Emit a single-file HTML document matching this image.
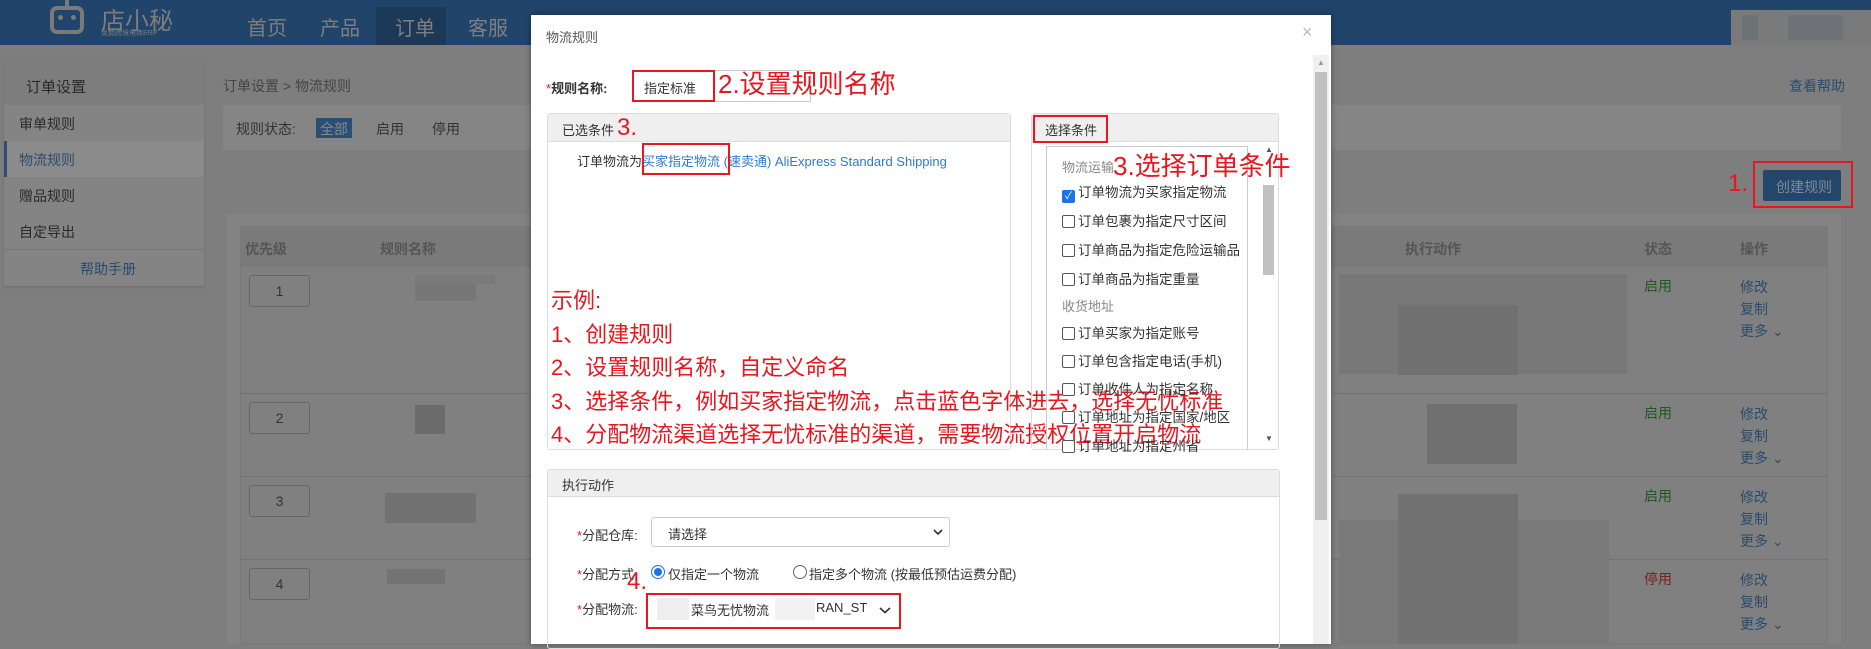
<!DOCTYPE html>
<html><head><meta charset="utf-8">
<style>
*{box-sizing:border-box;margin:0;padding:0}
body{width:1871px;height:644px;overflow:hidden;background:#7e7e7e;font-family:"Liberation Sans","Noto Sans CJK SC",sans-serif;font-size:14px;color:#333;position:relative}
.a{position:absolute;white-space:nowrap}
.red{color:#e8161e}
.rb{position:absolute;border:2px solid #e8161e}
.blk{position:absolute;background:#707070}
.cb{display:inline-block;width:13px;height:13px;border:1px solid #555;border-radius:2px;vertical-align:-2px;margin-right:3px;background:#fff}
.it{position:absolute;left:1062px;font-size:13.5px;color:#333}
</style></head><body>
<div class="a" style="left:0;top:0;width:1871px;height:45px;background:#21446a"></div>
<div class="a" style="left:50px;top:6px;width:34px;height:28px;border:4px solid #7a7a7a;border-radius:7px"></div>
<div class="a" style="left:65px;top:0;width:4px;height:7px;background:#7a7a7a"></div>
<div class="a" style="left:58px;top:15px;width:5px;height:5px;background:#7a7a7a;border-radius:50%"></div>
<div class="a" style="left:71px;top:15px;width:5px;height:5px;background:#7a7a7a;border-radius:50%"></div>
<div class="a" style="left:101px;top:1px;font-size:24px;color:#7d7d7d">店小秘</div>
<div class="a" style="left:101px;top:28px;font-size:7px;color:#7d7d7d">免费跨境电商ERP</div>
<div class="a" style="left:376px;top:7px;width:70px;height:38px;background:#1c3a58"></div>
<div class="a" style="left:247px;top:12px;font-size:20px;color:#7f7f7f">首页</div>
<div class="a" style="left:320px;top:12px;font-size:20px;color:#7f7f7f">产品</div>
<div class="a" style="left:395px;top:12px;font-size:20px;color:#7f7f7f">订单</div>
<div class="a" style="left:468px;top:12px;font-size:20px;color:#7f7f7f">客服</div>
<div class="a" style="left:1731px;top:10px;width:140px;height:35px;background:#7a7a7a"></div>
<div class="a" style="left:1742px;top:15px;width:16px;height:25px;background:#6a7474"></div>
<div class="a" style="left:1788px;top:15px;width:55px;height:25px;background:#6e7176"></div>

<div class="a" style="left:4px;top:64px;width:200px;height:222px;background:#848484;box-shadow:0 1px 2px #6f6f6f"></div>
<div class="a" style="left:4px;top:64px;width:200px;height:41px;background:#7d7d7d"></div>
<div class="a" style="left:26px;top:76px;font-size:15px;color:#2a2a2a">订单设置</div>
<div class="a" style="left:19px;top:114px;color:#2a2a2a">审单规则</div>
<div class="a" style="left:4px;top:141px;width:200px;height:36px;background:#8b8b8b;border-left:3px solid #2e4d6e"></div>
<div class="a" style="left:19px;top:150px;color:#2e4d6e">物流规则</div>
<div class="a" style="left:19px;top:186px;color:#2a2a2a">赠品规则</div>
<div class="a" style="left:19px;top:222px;color:#2a2a2a">自定导出</div>
<div class="a" style="left:4px;top:249px;width:200px;height:1px;background:#777"></div>
<div class="a" style="left:80px;top:259px;color:#2a4b6e">帮助手册</div>

<div class="a" style="left:223px;top:76px;color:#444">订单设置 &gt; 物流规则</div>
<div class="a" style="left:1789px;top:76px;color:#2a4b6e">查看帮助</div>
<div class="a" style="left:223px;top:105px;width:1618px;height:45px;background:#858585"></div>
<div class="a" style="left:236px;top:119px;color:#333">规则状态:</div>
<div class="a" style="left:316px;top:118px;width:36px;height:20px;background:#2b4f73"></div>
<div class="a" style="left:320px;top:119px;color:#888">全部</div>
<div class="a" style="left:376px;top:119px;color:#333">启用</div>
<div class="a" style="left:432px;top:119px;color:#333">停用</div>
<div class="a" style="left:1763px;top:170px;width:78px;height:31px;background:#24466a;border-radius:2px"></div>
<div class="a" style="left:1776px;top:177px;color:#7e8a98">创建规则</div>
<div class="rb" style="left:1753px;top:161px;width:100px;height:47px"></div>
<div class="a red" style="left:1728px;top:170px;font-size:24px">1.</div>

<div class="a" style="left:227px;top:214px;width:1614px;height:430px;background:#838383"></div>
<div class="a" style="left:240px;top:226px;width:1588px;height:418px;border:1px solid #777;background:#808080"></div>
<div class="a" style="left:240px;top:226px;width:1588px;height:41px;background:#7a7a7a"></div>
<div class="a" style="left:245px;top:239px;font-weight:bold;color:#555">优先级</div>
<div class="a" style="left:380px;top:239px;font-weight:bold;color:#555">规则名称</div>
<div class="a" style="left:1405px;top:239px;font-weight:bold;color:#555">执行动作</div>
<div class="a" style="left:1644px;top:239px;font-weight:bold;color:#555">状态</div>
<div class="a" style="left:1740px;top:239px;font-weight:bold;color:#555">操作</div>
<div class="a" style="left:240px;top:393px;width:1588px;height:1px;background:#737373"></div>
<div class="a" style="left:240px;top:476px;width:1588px;height:1px;background:#737373"></div>
<div class="a" style="left:240px;top:559px;width:1588px;height:1px;background:#737373"></div>
<div class="a" style="left:249px;top:275px;width:61px;height:32px;border:1px solid #666;border-radius:3px;text-align:center;line-height:30px;color:#333">1</div>
<div class="a" style="left:249px;top:402px;width:61px;height:32px;border:1px solid #666;border-radius:3px;text-align:center;line-height:30px;color:#333">2</div>
<div class="a" style="left:249px;top:485px;width:61px;height:32px;border:1px solid #666;border-radius:3px;text-align:center;line-height:30px;color:#333">3</div>
<div class="a" style="left:249px;top:568px;width:61px;height:32px;border:1px solid #666;border-radius:3px;text-align:center;line-height:30px;color:#333">4</div>
<div class="blk" style="left:415px;top:284px;width:61px;height:17px;background:#777"></div>
<div class="blk" style="left:415px;top:275px;width:80px;height:9px;background:#7a7a7a"></div>
<div class="blk" style="left:415px;top:405px;width:30px;height:29px;background:#6b6b6b"></div>
<div class="blk" style="left:385px;top:493px;width:91px;height:30px;background:#727272"></div>
<div class="blk" style="left:387px;top:569px;width:58px;height:15px;background:#737373"></div>
<div class="blk" style="left:1339px;top:274px;width:288px;height:100px;background:#787878"></div>
<div class="blk" style="left:1398px;top:305px;width:120px;height:70px;background:#707070"></div>
<div class="blk" style="left:1427px;top:404px;width:90px;height:60px;background:#707070"></div>
<div class="blk" style="left:1339px;top:520px;width:270px;height:124px;background:#797979"></div>
<div class="blk" style="left:1398px;top:494px;width:120px;height:150px;background:#727272"></div>
<div class="a" style="left:1644px;top:276px;color:#1d5a1d">启用</div>
<div class="a" style="left:1644px;top:403px;color:#1d5a1d">启用</div>
<div class="a" style="left:1644px;top:486px;color:#1d5a1d">启用</div>
<div class="a" style="left:1644px;top:569px;color:#7a1e1e">停用</div>
<div class="a" style="left:1740px;top:276px;color:#2a4b6e;line-height:22px">修改<br>复制<br>更多 ⌄</div>
<div class="a" style="left:1740px;top:403px;color:#2a4b6e;line-height:22px">修改<br>复制<br>更多 ⌄</div>
<div class="a" style="left:1740px;top:486px;color:#2a4b6e;line-height:22px">修改<br>复制<br>更多 ⌄</div>
<div class="a" style="left:1740px;top:569px;color:#2a4b6e;line-height:22px">修改<br>复制<br>更多 ⌄</div>

<div class="a" style="left:531px;top:15px;width:800px;height:629px;background:#fff;box-shadow:0 0 6px rgba(0,0,0,.4)"></div>
<div class="a" style="left:546px;top:27px;font-size:13px;color:#555">物流规则</div>
<div class="a" style="left:1302px;top:22px;font-size:18px;color:#bbb">×</div>
<div class="a" style="left:1313px;top:55px;width:16px;height:589px;background:#f0f0f0"></div>
<div class="a" style="left:1315px;top:72px;width:12px;height:448px;background:#c1c1c1"></div>
<div class="a" style="left:1317px;top:58px;font-size:8px;color:#999">▲</div>

<div class="a" style="left:546px;top:78px;font-size:13px;font-weight:bold;color:#333"><span class="red" style="font-weight:normal">*</span>规则名称:</div>
<div class="a" style="left:632px;top:70px;width:179px;height:32px;border:1px solid #ccc"></div>
<div class="a" style="left:644px;top:78px;font-size:13px;color:#333">指定标准</div>
<div class="rb" style="left:632px;top:70px;width:83px;height:32px"></div>
<div class="a red" style="left:718px;top:64px;font-size:26px">2.设置规则名称</div>

<div class="a" style="left:547px;top:113px;width:464px;height:337px;border:1px solid #ddd;border-radius:3px"></div>
<div class="a" style="left:548px;top:114px;width:462px;height:28px;background:#efefef;border-bottom:1px solid #ddd"></div>
<div class="a" style="left:562px;top:120px;font-size:13px;color:#333">已选条件</div>
<div class="a red" style="left:617px;top:114px;font-size:24px">3.</div>
<div class="a" style="left:577px;top:151px;font-size:13px;color:#333">订单物流为<span style="color:#2f7ad1">买家指定物流 (速卖通) AliExpress Standard Shipping</span></div>
<div class="rb" style="left:642px;top:143px;width:88px;height:32px"></div>
<div class="a red" style="left:551px;top:284px;font-size:22px;line-height:33.5px">示例:<br>1、创建规则<br>2、设置规则名称，自定义命名<br>3、选择条件，例如买家指定物流，点击蓝色字体进去，选择无忧标准<br>4、分配物流渠道选择无忧标准的渠道，需要物流授权位置开启物流</div>

<div class="a" style="left:1031px;top:113px;width:248px;height:337px;border:1px solid #ddd;border-radius:3px"></div>
<div class="a" style="left:1032px;top:114px;width:246px;height:28px;background:#efefef;border-bottom:1px solid #ddd"></div>
<div class="a" style="left:1045px;top:120px;font-size:13px;color:#333">选择条件</div>
<div class="rb" style="left:1033px;top:115px;width:75px;height:28px"></div>
<div class="a" style="left:1046px;top:146px;width:202px;height:304px;border:1px solid #ccc;border-bottom:none"></div>
<div class="a" style="left:1263px;top:185px;width:11px;height:90px;background:#c1c1c1"></div>
<div class="a" style="left:1265px;top:145px;font-size:8px;color:#555">▲</div>
<div class="a" style="left:1265px;top:434px;font-size:8px;color:#555">▼</div>
<div class="it" style="top:157px;left:1062px;color:#888;font-size:13px">物流运输</div>
<div class="it" style="top:181px"><span class="cb" style="background:#1a73e8;border-color:#1a73e8;color:#fff;font-size:10px;line-height:11px;text-align:center">✓</span>订单物流为买家指定物流</div>
<div class="it" style="top:210px"><span class="cb"></span>订单包裹为指定尺寸区间</div>
<div class="it" style="top:239px"><span class="cb"></span>订单商品为指定危险运输品</div>
<div class="it" style="top:268px"><span class="cb"></span>订单商品为指定重量</div>
<div class="it" style="top:296px;color:#888;font-size:13px">收货地址</div>
<div class="it" style="top:322px"><span class="cb"></span>订单买家为指定账号</div>
<div class="it" style="top:350px"><span class="cb"></span>订单包含指定电话(手机)</div>
<div class="it" style="top:378px"><span class="cb"></span>订单收件人为指定名称</div>
<div class="it" style="top:406px"><span class="cb"></span>订单地址为指定国家/地区</div>
<div class="it" style="top:435px"><span class="cb"></span>订单地址为指定州省</div>
<div class="a red" style="left:1113px;top:146px;font-size:26px">3.选择订单条件</div>

<div class="a" style="left:547px;top:469px;width:733px;height:180px;border:1px solid #ddd;border-radius:3px"></div>
<div class="a" style="left:548px;top:470px;width:731px;height:27px;background:#efefef;border-bottom:1px solid #ddd"></div>
<div class="a" style="left:562px;top:475px;font-size:13px;color:#333">执行动作</div>
<div class="a" style="left:577px;top:525px;font-size:13px;color:#333"><span class="red">*</span>分配仓库:</div>
<div class="a" style="left:651px;top:517px;width:299px;height:30px;border:1px solid #ccc;border-radius:3px"></div>
<div class="a" style="left:668px;top:524px;font-size:13px;color:#333">请选择</div>
<svg class="a" style="left:933px;top:528px" width="10" height="8"><path d="M1 2 L5 6 L9 2" stroke="#333" stroke-width="1.6" fill="none"/></svg>
<div class="a" style="left:577px;top:564px;font-size:13px;color:#333"><span class="red">*</span>分配方式:</div>
<div class="a" style="left:651px;top:565px;width:14px;height:14px;border:1px solid #1a73e8;border-radius:50%"></div>
<div class="a" style="left:654px;top:568px;width:8px;height:8px;background:#1a73e8;border-radius:50%"></div>
<div class="a" style="left:668px;top:564px;font-size:13px;color:#333">仅指定一个物流</div>
<div class="a" style="left:793px;top:565px;width:14px;height:14px;border:1px solid #666;border-radius:50%"></div>
<div class="a" style="left:809px;top:564px;font-size:13px;color:#333">指定多个物流 (按最低预估运费分配)</div>
<div class="a red" style="left:627px;top:568px;font-size:24px">4.</div>
<div class="a" style="left:577px;top:599px;font-size:13px;color:#333"><span class="red">*</span>分配物流:</div>
<div class="a" style="left:657px;top:598px;width:32px;height:22px;background:#eee"></div>
<div class="a" style="left:775px;top:598px;width:40px;height:22px;background:#f2f2f2"></div>
<div class="a" style="left:691px;top:600px;font-size:13px;color:#333">菜鸟无忧物流</div>
<div class="a" style="left:816px;top:600px;font-size:13px;color:#333">RAN_ST</div>
<svg class="a" style="left:879px;top:606px" width="12" height="8"><path d="M1 2 L6 6.5 L11 2" stroke="#333" stroke-width="1.6" fill="none"/></svg>
<div class="rb" style="left:646px;top:593px;width:255px;height:36px"></div>
</body></html>
